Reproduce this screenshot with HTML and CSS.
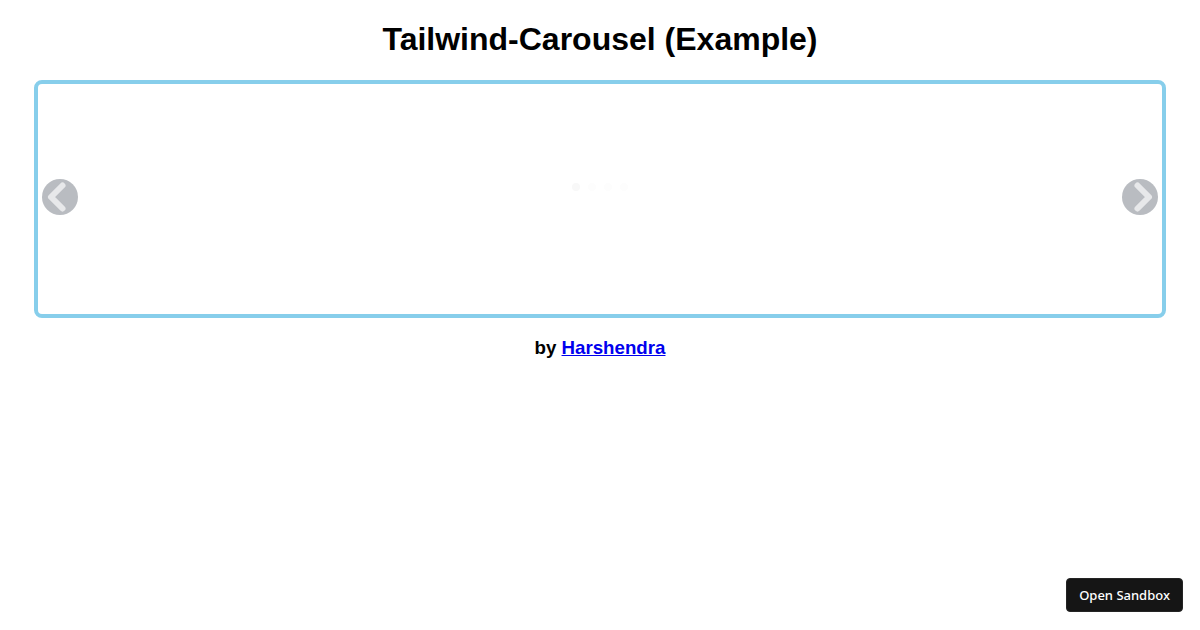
FILE: index.html
```html
<!DOCTYPE html>
<html lang="en">
<head>
    <meta charset="UTF-8">
    <meta name="viewport" content="width=device-width, initial-scale=1.0">
    <title>Tailwind-Carousel (Example)</title>
    <link rel="stylesheet" href="styles.css">
</head>
<body>
    <h1>Tailwind-Carousel (Example)</h1>

    <div class="carousel">
        <button class="arrow" type="button" aria-label="Previous slide">
            <svg viewBox="0 0 36 36" width="36" height="36">
                <circle cx="18" cy="18" r="18" fill="#b9bcc1" />
                <path d="M20.5 6.5 L9 18 L20.5 29.5" />
            </svg>
        </button>

        <div class="dots">
            <button class="dot active" type="button" aria-label="Slide 1"></button>
            <button class="dot" type="button" aria-label="Slide 2"></button>
            <button class="dot" type="button" aria-label="Slide 3"></button>
            <button class="dot" type="button" aria-label="Slide 4"></button>
        </div>

        <button class="arrow" type="button" aria-label="Next slide">
            <svg viewBox="0 0 36 36" width="36" height="36">
                <circle cx="18" cy="18" r="18" fill="#b9bcc1" />
                <path d="M15.5 6.5 L27 18 L15.5 29.5" />
            </svg>
        </button>
    </div>

    <h3>by <a href="#">Harshendra</a></h3>

    <button class="sandbox-button" type="button">Open Sandbox</button>
</body>
</html>
```
FILE: styles.css
```css
body {
    margin: 0;
    font-family: "Liberation Sans", Arial, sans-serif;
    text-align: center;
    color: #000;
    background-color: #fff;
}

.carousel {
    display: flex;
    justify-content: space-between;
    align-items: center;
    box-sizing: border-box;
    min-height: 238px;
    margin: 0 34px;
    padding: 0 4px 4px;
    border: 4px solid skyblue;
    border-radius: 8px;
}

.arrow {
    padding: 0;
    border: none;
    border-radius: 50%;
    background: none;
    cursor: pointer;
}

.arrow svg {
    display: block;
}

.arrow path {
    fill: none;
    stroke: #e7e8ea;
    stroke-width: 6;
    stroke-linecap: round;
    stroke-linejoin: round;
}

.dots {
    display: flex;
    gap: 8px;
    padding-bottom: 20px;
}

.dot {
    width: 8px;
    height: 8px;
    padding: 0;
    border: none;
    border-radius: 50%;
    background-color: #fdfdfd;
    cursor: pointer;
}

.dot.active {
    background-color: #f8f8f8;
}

a {
    color: #0000ee;
}

/* stays in the corner over the page */
.sandbox-button {
    position: fixed;
    right: 17px;
    bottom: 18px;
    height: 34px;
    padding: 0 12px;
    border: 1px solid #242424;
    border-radius: 4px;
    background-color: #151515;
    color: #fff;
    font-family: "Noto Sans", sans-serif;
    font-size: 13px;
    font-weight: 500;
    cursor: pointer;
}
```
